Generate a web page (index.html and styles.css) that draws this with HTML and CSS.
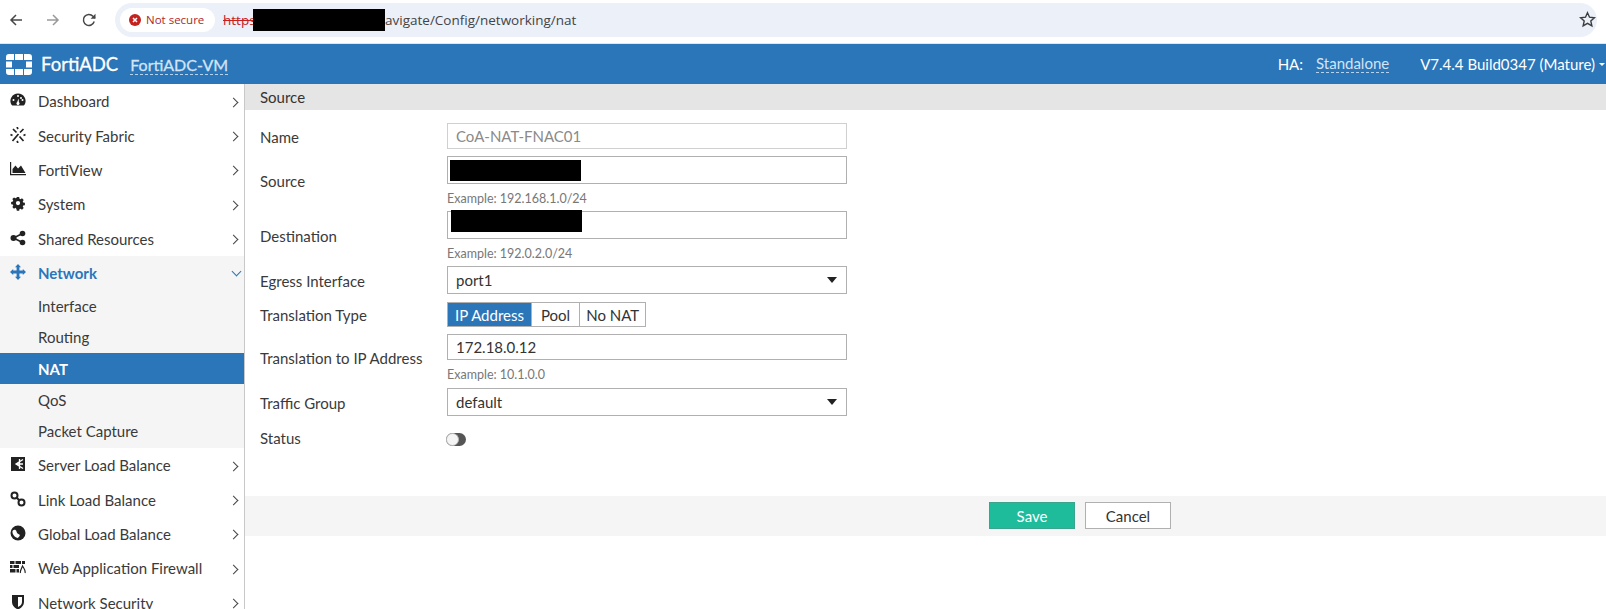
FILE: index.html
```html
<!DOCTYPE html>
<html lang="en">
<head>
<meta charset="utf-8">
<title>FortiADC NAT</title>
<link rel="stylesheet" href="styles.css">
</head>
<body>
<div class="browser">
  <svg class="nav nav-back" viewBox="0 0 16 16"><path d="M14 8H3M8 3 3 8l5 5"/></svg>
  <svg class="nav nav-fwd" viewBox="0 0 16 16"><path d="M2 8h11M8 3l5 5-5 5"/></svg>
  <svg class="nav nav-reload" viewBox="0 0 16 16"><path d="M13.2 9.500A5.500 5.500 0 1 1 12 4.200L14 6"/><path class="fill" d="M14.500 1.800v4.900H9.600z"/></svg>
  <div class="omnibox">
    <div class="chip">
      <svg class="chip-icon" viewBox="0 0 12 12"><circle cx="6" cy="6" r="6" fill="#c5221f"/><path d="M4 4l4 4M8 4l-4 4" stroke="#fff" stroke-width="1.500"/></svg>
      <span>Not secure</span>
    </div>
    <div class="url"><s>https</s><span class="redact redact-url"></span><span>avigate/Config/networking/nat</span></div>
    <svg class="star" viewBox="0 0 16 16"><path d="M8 1.600l1.900 4.200 4.600.5-3.400 3.100 1 4.500L8 11.600l-4.100 2.300 1-4.500L1.500 6.300l4.600-.5z"/></svg>
  </div>
</div>

<header class="topbar">
  <svg class="logo" viewBox="0 0 26 21">
    <path d="M0 6V3a3 3 0 0 1 3-3h5v6zM9 0h8v6H9zM18 0h5a3 3 0 0 1 3 3v3h-8zM0 7.500h6v6H0zM20 7.500h6v6h-6zM0 15h8v6H3a3 3 0 0 1-3-3zM9 15h8v6H9zM18 15h8v3a3 3 0 0 1-3 3h-5z"/>
  </svg>
  <span class="brand">FortiADC</span>
  <span class="hostname">FortiADC-VM</span>
  <span class="spacer"></span>
  <span class="ha">HA:</span>
  <span class="standalone">Standalone</span>
  <span class="version">V7.4.4 Build0347 (Mature)</span>
  <span class="caret"></span>
</header>

<div class="main">
  <nav class="sidebar">
    <a class="item">
      <svg class="icon" viewBox="0 0 16 16"><path fill-rule="evenodd" d="M8 1.500a7.500 7.500 0 0 0-6.500 11.300c.2.400.6.600 1 .6h11c.4 0 .8-.2 1-.6A7.500 7.500 0 0 0 8 1.500zM8 3a1 1 0 1 1 0 2 1 1 0 0 1 0-2zM3.500 7a1 1 0 1 1 0 2 1 1 0 0 1 0-2zM12.500 7a1 1 0 1 1 0 2 1 1 0 0 1 0-2zM11 5a1 1 0 1 1-1 1 1 1 0 0 1 1-1zM8.600 6.500l.3 3.700a1.500 1.500 0 1 1-1.800 0z"/></svg>
      <span class="label">Dashboard</span><span class="chev"></span>
    </a>
    <a class="item">
      <svg class="icon" viewBox="0 0 16 16"><g stroke="currentColor" stroke-width="1.700" fill="none"><path d="M3 2l3.500 3.500M9.500 9.500L13.500 14M13.500 2L10 5.500M8.500 7L2.500 14"/><path d="M.5 7.500l2 1M13.500 8.500l2-1M7 14l1 2M7 0l1 2"/></g></svg>
      <span class="label">Security Fabric</span><span class="chev"></span>
    </a>
    <a class="item">
      <svg class="icon" viewBox="0 0 16 16"><path d="M0 1h1.200v12H16v1.300H0z"/><path d="M2.500 12V8l3-3.500 2.500 3L11 4.500l4.500 7.500z"/></svg>
      <span class="label">FortiView</span><span class="chev"></span>
    </a>
    <a class="item">
      <svg class="icon" viewBox="0 0 16 16"><path fill-rule="evenodd" d="M6.600 1h2.800l.4 2 1.200.5 1.700-1.100 2 2-1.100 1.700.5 1.200 2 .4v2.800l-2 .4-.5 1.200 1.100 1.700-2 2-1.700-1.100-1.200.5-.4 1.800H6.600l-.4-1.800L5 13.700l-1.700 1.100-2-2 1.100-1.700-.5-1.200-2-.4V6.700l2-.4.500-1.200-1.100-1.700 2-2L5 2.500l1.200-.5zM8 5.600a2.500 2.500 0 1 0 0 5 2.500 2.500 0 0 0 0-5z" transform="translate(1.200 1.200) scale(.85)"/></svg>
      <span class="label">System</span><span class="chev"></span>
    </a>
    <a class="item">
      <svg class="icon" viewBox="0 0 16 16"><circle cx="3.500" cy="8" r="3"/><circle cx="12.500" cy="3.500" r="2.800"/><circle cx="12.500" cy="12.500" r="2.800"/><path d="M3.500 8l9-4.500M3.500 8l9 4.500" stroke="currentColor" stroke-width="1.500"/></svg>
      <span class="label">Shared Resources</span><span class="chev"></span>
    </a>
    <div class="group">
      <a class="item item-open">
        <svg class="icon" viewBox="0 0 16 16"><path d="M8 0l3 3.200H9.400v3.400h3.400V5l3.200 3-3.200 3V9.400H9.400v3.400H11L8 16l-3-3.200h1.600V9.400H3.200V11L0 8l3.200-3v1.600h3.400V3.200H5z"/></svg>
        <span class="label">Network</span><span class="chev chev-down"></span>
      </a>
      <a class="sub">Interface</a>
      <a class="sub">Routing</a>
      <a class="sub sub-active">NAT</a>
      <a class="sub">QoS</a>
      <a class="sub">Packet Capture</a>
    </div>
    <a class="item">
      <svg class="icon" viewBox="0 0 16 16"><path d="M1 1h14v14H1z"/><path d="M13 3.500L6 8l7 4.500M13 8H6M9.500 3v10" stroke="#fff" stroke-width="1.300" fill="none"/></svg>
      <span class="label">Server Load Balance</span><span class="chev"></span>
    </a>
    <a class="item">
      <svg class="icon" viewBox="0 0 16 16"><g fill="none" stroke="currentColor" stroke-width="2"><circle cx="4.500" cy="4.500" r="3"/><circle cx="11.500" cy="11.500" r="3"/><path d="M6.500 6.500l3 3"/></g></svg>
      <span class="label">Link Load Balance</span><span class="chev"></span>
    </a>
    <a class="item">
      <svg class="icon" viewBox="0 0 16 16"><circle cx="8" cy="8" r="7.500"/><path fill="#fff" d="M2.500 6c1.500-2 3.500-1.500 4 .5s1.500 2.500 2.800 3-.3 3-1.800 3.600C4.500 12 2 9 2.500 6z"/></svg>
      <span class="label">Global Load Balance</span><span class="chev"></span>
    </a>
    <a class="item">
      <svg class="icon" viewBox="0 0 16 16"><path d="M0 2h4.500v3H0zM5.500 2H11v3H5.500zM12 2h3v3h-3zM0 6h2.500v3H0zM3.500 6H9v3H3.500zM0 10h5.500v3.500H0zM6.500 10H9v3.500H6.500z"/><path d="M10.500 14c-.8-2 .8-3.500 2-7 1.500 2.500 3.300 4.500 2.500 7" fill="none" stroke="currentColor" stroke-width="1.200"/></svg>
      <span class="label">Web Application Firewall</span><span class="chev"></span>
    </a>
    <a class="item">
      <svg class="icon" viewBox="0 0 16 16"><path fill-rule="evenodd" d="M2 1h12v7c0 3.500-2.500 6-6 7.500C4.500 14 2 11.500 2 8zM8 3v10c2.500-1 4-2.800 4-5V3z"/></svg>
      <span class="label">Network Security</span><span class="chev"></span>
    </a>
  </nav>

  <main class="content">
    <div class="section">Source</div>
    <form class="form">
      <div class="row row-name">
        <label class="lbl">Name</label>
        <div class="field"><div class="input input-disabled">CoA-NAT-FNAC01</div></div>
      </div>
      <div class="row row-help">
        <label class="lbl">Source</label>
        <div class="field">
          <div class="input input-tall"></div>
          <span class="redact redact-source"></span>
          <div class="help">Example: 192.168.1.0/24</div>
        </div>
      </div>
      <div class="row row-help">
        <label class="lbl">Destination</label>
        <div class="field">
          <div class="input input-tall"></div>
          <span class="redact redact-dest"></span>
          <div class="help">Example: 192.0.2.0/24</div>
        </div>
      </div>
      <div class="row row-select">
        <label class="lbl lbl-low">Egress Interface</label>
        <div class="field"><div class="input input-tall select">port1<span class="arrow"></span></div></div>
      </div>
      <div class="row row-type">
        <label class="lbl">Translation Type</label>
        <div class="field">
          <div class="segments">
            <span class="seg seg-on">IP Address</span><span class="seg">Pool</span><span class="seg">No NAT</span>
          </div>
        </div>
      </div>
      <div class="row row-help row-help-short">
        <label class="lbl">Translation to IP Address</label>
        <div class="field">
          <div class="input">172.18.0.12</div>
          <div class="help">Example: 10.1.0.0</div>
        </div>
      </div>
      <div class="row row-select">
        <label class="lbl lbl-low">Traffic Group</label>
        <div class="field"><div class="input input-tall select">default<span class="arrow"></span></div></div>
      </div>
      <div class="row row-status">
        <label class="lbl">Status</label>
        <div class="field"><span class="toggle"><span class="knob"></span></span></div>
      </div>
    </form>
    <div class="footer">
      <button type="button" class="btn btn-save">Save</button>
      <button type="button" class="btn btn-cancel">Cancel</button>
    </div>
  </main>
</div>
</body>
</html>
```

FILE: styles.css
```css
* { box-sizing: border-box; }
html, body { margin: 0; height: 609px; overflow: hidden; background: #fff; }
body { font-family: Lato, "Liberation Sans", sans-serif; font-size: 15px; color: #333; }

/* browser chrome */
.browser { height: 44px; display: flex; align-items: center; padding: 0 9px 4px 8px; border-bottom: 1px solid #dfe6f2; background: #fff; }
.nav { width: 16px; height: 16px; fill: none; stroke: #474747; stroke-width: 1.5; flex: none; }
.nav .fill { fill: #474747; stroke: none; }
.nav-fwd { stroke: #9a9a9a; margin-left: 21px; }
.nav-reload { margin-left: 20px; }
.omnibox { margin-left: 18px; flex: 1; height: 34px; border-radius: 17px; background: #ebf0f9; display: flex; align-items: center; padding: 0 0 0 5px; }
.chip { width: 95px; height: 24px; border-radius: 12px; background: #fff; display: flex; align-items: center; padding-left: 9px; gap: 5px; font-family: "Open Sans", sans-serif; font-size: 11.5px; color: #b3261e; }
.chip-icon { width: 12px; height: 12px; flex: none; }
.url { margin-left: 8px; flex: 1; display: flex; align-items: center; font-family: "Open Sans", sans-serif; font-size: 13.5px; color: #444; }
.url s { color: #c5221f; width: 30px; }
.redact { background: #000; display: block; }
.redact-url { width: 132px; height: 22px; }
.star { width: 17px; height: 17px; margin-right: 1px; fill: none; stroke: #3c3c3c; stroke-width: 1.3; }

/* top bar */
.topbar { height: 40px; background: #2b75b9; color: #fff; display: flex; align-items: center; padding: 0 0 0 6px; white-space: nowrap; }
.logo { width: 26px; height: 21px; fill: #fff; flex: none; }
.brand { margin-left: 9px; font-size: 18.5px; -webkit-text-stroke: .3px #fff; }
.hostname { margin-left: 12px; font-size: 16px; color: #d2e4f5; -webkit-text-stroke: .3px #d2e4f5; border-bottom: 1px dashed #b7d2ec; line-height: 18px; margin-top: 3px; }
.spacer { flex: 1; }
.ha { font-size: 15px; }
.standalone { margin-left: 13px; font-size: 15px; color: #d2e4f5; border-bottom: 1px dashed #b7d2ec; line-height: 17px; }
.version { margin-left: 31px; font-size: 15px; }
.caret { margin-left: 4px; margin-right: 1px; border: 3.5px solid transparent; border-top-color: #fff; border-bottom: 0; }

.main { display: flex; height: 525px; }

/* sidebar */
.sidebar { width: 245px; flex: none; border-right: 1px solid #c8c8c8; overflow: hidden; }
.item { height: 34.4px; display: flex; align-items: center; padding: 0 7px 0 10px; font-size: 15px; color: #3a3a3a; }
.icon { width: 16px; height: 16px; fill: currentColor; flex: none; color: #222; margin-top: -2px; }
.label { margin-left: 12px; flex: 1; }
.chev { width: 7px; height: 7px; border-top: 1px solid #444; border-right: 1px solid #444; transform: rotate(45deg); margin-top: 2px; }
.chev-down { transform: rotate(135deg); border-color: #2b75b9; margin: -3px -3px 0 0; }
.group { background: #f5f5f5; height: 192px; }
.item-open { color: #2b75b9; font-weight: 700; }
.item-open .icon { color: #2b75b9; }
.sub { height: 31.3px; display: flex; align-items: center; padding-left: 38px; color: #3a3a3a; }
.sub-active { background: #2b75b9; color: #fff; font-weight: 700; }

/* content */
.content { flex: 1; min-width: 0; }
.section { height: 26px; background: #e5e5e5; padding-left: 15px; line-height: 26px; font-size: 15px; }
.form { padding-top: 13px; height: 386px; }
.row { display: flex; }
.lbl { width: 202px; padding-left: 15px; flex: none; display: flex; align-items: center; color: #3a3a3a; }
.field { width: 400px; position: relative; }
.row-name { height: 26px; margin-bottom: 7px; }
.row-name .lbl { padding-top: 2px; }
.row-help { height: 55px; }
.row-help .lbl { padding-bottom: 5px; }
.row-help-short { height: 54px; }
.row-help-short .lbl { padding-bottom: 7px; }
.row-select { height: 28px; }
.row-select .lbl-low { padding-top: 1px; }
.row-type { height: 25px; margin: 8px 0 7px; }
.row-status { height: 46px; }
.row-status .lbl { height: 44px; }
.row-status .field { display: flex; align-items: center; }
.input { height: 26px; border: 1px solid #b0b0b0; background: #fff; padding-left: 8px; display: flex; align-items: center; font-size: 15px; color: #333; }
.input-tall { height: 28px; }
.input-disabled { border-color: #d0d0d0; color: #8a8a8a; }
.help { height: 27px; padding-top: 6px; line-height: 18px; font-size: 12.5px; color: #777; }
.row-help-short .help { height: 28px; }
.redact-source { position: absolute; left: 3px; top: 4px; width: 131px; height: 21px; }
.redact-dest { position: absolute; left: 4px; top: -1px; width: 131px; height: 22px; }
.select { position: relative; }
.arrow { position: absolute; right: 9px; top: 10px; border: 5px solid transparent; border-top: 6px solid #222; border-bottom: 0; }
.segments { display: inline-flex; height: 25px; border: 1px solid #b0b0b0; }
.seg { padding: 0 6px; display: flex; align-items: center; font-size: 15px; color: #333; border-left: 1px solid #b0b0b0; }
.seg:first-child { border-left: 0; }
.seg-on { background: #2b75b9; color: #fff; padding: 0 7px; }
.seg:nth-child(2) { padding: 0 9px; }
.toggle { display: block; width: 20px; height: 13px; border-radius: 7px; background: #555; margin-left: -1px; }
.knob { display: block; width: 13px; height: 13px; border-radius: 50%; background: #f4f4f4; border: 1px solid #bbb; }

.footer { height: 40px; background: #f5f5f5; display: flex; align-items: center; gap: 10px; padding: 0 0 1px 744px; }
.btn { width: 86px; height: 27px; font-family: inherit; font-size: 15px; padding: 0; }
.btn-save { background: #1fbc9c; color: #fff; border: 1px solid #3aa58c; }
.btn-cancel { background: #fff; color: #333; border: 1px solid #b0b0b0; }
```
